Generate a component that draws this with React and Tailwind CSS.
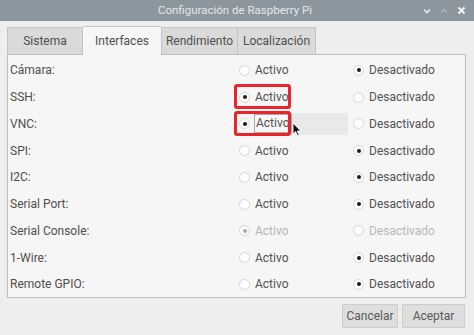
import React from 'react';

const rows = [
  { label: 'Cámara:', on: false },
  { label: 'SSH:', on: true, mark: true },
  { label: 'VNC:', on: true, mark: true, hover: true },
  { label: 'SPI:', on: false },
  { label: 'I2C:', on: false },
  { label: 'Serial Port:', on: false },
  { label: 'Serial Console:', on: true, disabled: true },
  { label: '1-Wire:', on: false },
  { label: 'Remote GPIO:', on: false },
];

const Radio = ({ checked, disabled }) => (
  <span className="w-[11px] h-[11px] rounded-full bg-white border border-[#d6d6d6] flex items-center justify-center shrink-0">
    {checked && (
      <span className={`w-[4px] h-[4px] rounded-full ${disabled ? 'bg-[#a8a8a8]' : 'bg-[#1a1a1a]'}`} />
    )}
  </span>
);

const Cursor = () => (
  <svg width="10" height="15" viewBox="0 0 10 15" className="absolute left-[53px] top-[11px]">
    <path d="M1 1 L1 12 L3.6 9.6 L5.6 14 L7.2 13.3 L5.3 9 L8.8 9 Z" fill="#111" stroke="#fff" strokeWidth="0.9" />
  </svg>
);

const App = () => {
  return (
    <div className="w-[474px] h-[335px] bg-[#eeeeee] flex flex-col overflow-hidden" style={{ fontFamily: 'Roboto, "Liberation Sans", sans-serif' }}>
      {/* title bar */}
      <div className="h-[21px] bg-[#8c969f] flex items-center relative shrink-0">
        <div className="flex-1 text-center text-[11.5px] text-[#e4e7ea] pr-[4px]">Configuración de Raspberry Pi</div>
        <div className="absolute right-[8px] top-0 h-full flex items-center gap-[9px]">
          <svg width="8" height="6" viewBox="0 0 8 6"><path d="M1 1.5 L4 4.5 L7 1.5" fill="none" stroke="#e8ebee" strokeWidth="1.6" /></svg>
          <svg width="8" height="6" viewBox="0 0 8 6"><path d="M1 4.5 L4 1.5 L7 4.5" fill="none" stroke="#a9b2b9" strokeWidth="1.6" /></svg>
          <svg width="9" height="9" viewBox="0 0 9 9"><path d="M1.5 1.5 L7.5 7.5 M7.5 1.5 L1.5 7.5" fill="none" stroke="#f4f6f7" strokeWidth="2" /></svg>
        </div>
      </div>

      {/* tabs */}
      <div className="flex items-end h-[33px] pl-[7px] shrink-0 text-[12px] text-[#4e4e4e]">
        <div className="w-[76px] h-[27px] bg-[#dadada] border border-[#c3c3c3] border-b-0 flex items-center justify-center">Sistema</div>
        <div className="w-[78px] h-[29px] bg-[#f6f6f6] border-t border-[#c8c8c8] flex items-center justify-center relative z-10 -mb-px pb-px">Interfaces</div>
        <div className="w-[77px] h-[27px] bg-[#dadada] border border-[#c3c3c3] border-b-0 flex items-center justify-center">Rendimiento</div>
        <div className="w-[78px] h-[27px] bg-[#dadada] border border-[#c3c3c3] border-b-0 border-l-0 flex items-center justify-center">Localización</div>
      </div>

      {/* panel */}
      <div className="ml-[7px] w-[459px] h-[244px] bg-[#f6f6f6] border border-[#bdbdbd] pt-[2px] pl-[2px] shrink-0">
        {rows.map((r) => (
          <div key={r.label} className="h-[26.75px] grid grid-cols-[229px_114px_1fr] items-center text-[12px]">
            <div className="text-[#4e4e4e]">{r.label}</div>
            <div className="relative h-full flex items-center">
              {r.hover && <div className="absolute left-[48px] top-[2px] w-[61px] h-[22px] bg-[#e9e9e9]" />}
              {r.mark && (
                <div className="absolute left-[-5px] top-0 w-[57px] h-[25px] border-[3px] border-[#e8242c] rounded-[3px] z-10" />
              )}
              <div className="relative flex items-center gap-[5px]">
                <Radio checked={r.on} disabled={r.disabled} />
                <span className={`${r.disabled ? 'text-[#b3b3b3]' : 'text-[#525252]'} ${r.hover ? 'border border-[#a9a9a9] px-px -mx-px leading-[17px]' : ''}`}>Activo</span>
              </div>
              {r.hover && <Cursor />}
            </div>
            <div className="flex items-center gap-[5px]">
              <Radio checked={!r.on && !r.disabled} disabled={r.disabled} />
              <span className={r.disabled ? 'text-[#b8b8b8]' : 'text-[#525252]'}>Desactivado</span>
            </div>
          </div>
        ))}
      </div>

      {/* buttons */}
      <div className="flex justify-end gap-[4px] pr-[9px] mt-[6px]">
        <button className="w-[56px] h-[24px] bg-[#dedede] border border-[#cdcdcd] text-[12px] text-[#585858]">Cancelar</button>
        <button className="w-[63px] h-[24px] bg-[#dedede] border border-[#cdcdcd] text-[12px] text-[#585858]">Aceptar</button>
      </div>
    </div>
  );
};

export default App;
